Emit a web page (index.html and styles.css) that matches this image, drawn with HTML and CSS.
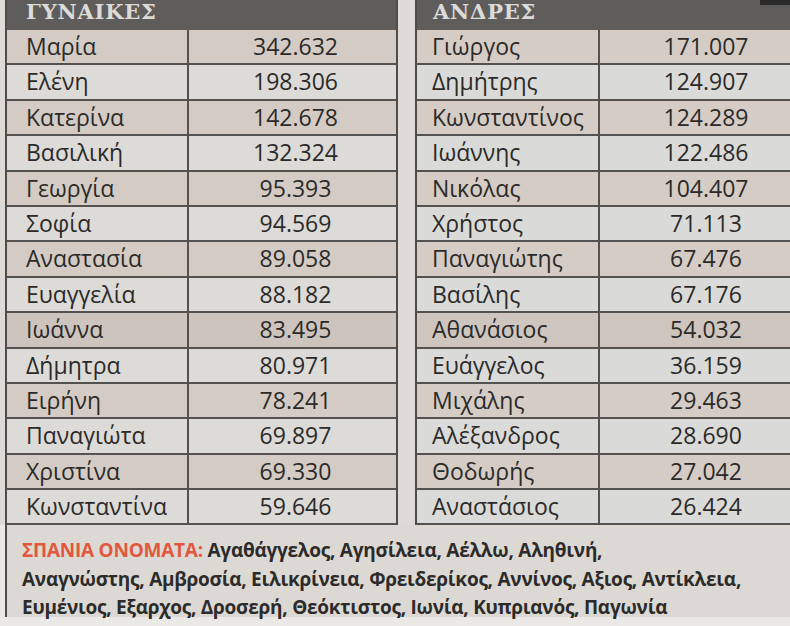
FILE: index.html
```html
<!DOCTYPE html>
<html lang="el">
<head>
<meta charset="utf-8">
<title>Ονόματα</title>
<link rel="stylesheet" href="styles.css">
</head>
<body>
<div class="page">
  <div class="tables">
    <section class="panel panel-left">
      <div class="head">ΓΥΝΑΙΚΕΣ</div>
      <div class="row odd"><span class="name">Μαρία</span><span class="num">342.632</span></div>
      <div class="row"><span class="name">Ελένη</span><span class="num">198.306</span></div>
      <div class="row odd"><span class="name">Κατερίνα</span><span class="num">142.678</span></div>
      <div class="row"><span class="name">Βασιλική</span><span class="num">132.324</span></div>
      <div class="row odd"><span class="name">Γεωργία</span><span class="num">95.393</span></div>
      <div class="row"><span class="name">Σοφία</span><span class="num">94.569</span></div>
      <div class="row odd"><span class="name">Αναστασία</span><span class="num">89.058</span></div>
      <div class="row"><span class="name">Ευαγγελία</span><span class="num">88.182</span></div>
      <div class="row odd dark"><span class="name">Ιωάννα</span><span class="num">83.495</span></div>
      <div class="row"><span class="name">Δήμητρα</span><span class="num">80.971</span></div>
      <div class="row odd"><span class="name">Ειρήνη</span><span class="num">78.241</span></div>
      <div class="row"><span class="name">Παναγιώτα</span><span class="num">69.897</span></div>
      <div class="row odd"><span class="name">Χριστίνα</span><span class="num">69.330</span></div>
      <div class="row"><span class="name">Κωνσταντίνα</span><span class="num">59.646</span></div>
    </section>
    <section class="panel panel-right">
      <div class="head">ΑΝΔΡΕΣ</div>
      <div class="row odd"><span class="name">Γιώργος</span><span class="num">171.007</span></div>
      <div class="row"><span class="name">Δημήτρης</span><span class="num">124.907</span></div>
      <div class="row odd"><span class="name">Κωνσταντίνος</span><span class="num">124.289</span></div>
      <div class="row"><span class="name">Ιωάννης</span><span class="num">122.486</span></div>
      <div class="row odd"><span class="name">Νικόλας</span><span class="num">104.407</span></div>
      <div class="row"><span class="name">Χρήστος</span><span class="num">71.113</span></div>
      <div class="row odd"><span class="name">Παναγιώτης</span><span class="num">67.476</span></div>
      <div class="row"><span class="name">Βασίλης</span><span class="num">67.176</span></div>
      <div class="row odd dark"><span class="name">Αθανάσιος</span><span class="num">54.032</span></div>
      <div class="row"><span class="name">Ευάγγελος</span><span class="num">36.159</span></div>
      <div class="row odd"><span class="name">Μιχάλης</span><span class="num">29.463</span></div>
      <div class="row"><span class="name">Αλέξανδρος</span><span class="num">28.690</span></div>
      <div class="row odd"><span class="name">Θοδωρής</span><span class="num">27.042</span></div>
      <div class="row"><span class="name">Αναστάσιος</span><span class="num">26.424</span></div>
    </section>
  </div>
  <div class="rare">
    <p><span class="rare-title">ΣΠΑΝΙΑ ΟΝΟΜΑΤΑ:</span> Αγαθάγγελος, Αγησίλεια, Αέλλω, Αληθινή,<br>Αναγνώστης, Αμβροσία, Ειλικρίνεια, Φρειδερίκος, Αννίνος, Αξιος, Αντίκλεια,<br>Ευμένιος, Εξαρχος, Δροσερή, Θεόκτιστος, Ιωνία, Κυπριανός, Παγωνία</p>
  </div>
  <div class="blot"></div>
</div>
</body>
</html>
```

FILE: styles.css
```css
html, body {
  margin: 0;
  padding: 0;
}
body {
  background: #ebe9e6;
  width: 790px;
  height: 626px;
  overflow: hidden;
}
.page {
  position: relative;
  width: 790px;
  height: 626px;
  overflow: hidden;
  font-family: "Open Sans", "Noto Sans", sans-serif;
  color: #2b2a29;
}
.tables {
  display: flex;
  padding-left: 5px;
  background: #dedad5;
}
.panel {
  border-left: 2px solid #4e4d4b;
}
.panel-left {
  width: 389px;
  border-right: 2px solid #4e4d4b;
}
.panel-right {
  margin-left: 17px;
  flex: 1;
}
.head {
  height: 30px;
  box-sizing: border-box;
  background: #5e5d5b;
  color: #dcdbd8;
  font-family: "DejaVu Serif", serif;
  font-weight: bold;
  font-size: 21px;
  letter-spacing: 0.8px;
  line-height: 24px;
  padding-left: 19px;
}
.panel-right .head {
  padding-left: 16px;
}
.row {
  display: grid;
  grid-template-columns: 182px 1fr;
  height: 35.4px;
  box-sizing: border-box;
  border-bottom: 2px solid #535250;
  background: #dddbd7;
  font-size: 23px;
  font-weight: 500;
  line-height: 33px;
}
.row.odd {
  background: #d4ccc4;
}
.row.dark {
  background: #cdc5bd;
}
.panel-right .row {
  grid-template-columns: 183px 1fr;
  background: #dadbd8;
}
.panel-right .row.odd {
  background: #d5cdc5;
}
.panel-right .row.dark {
  background: #cec6be;
}
.name {
  padding-left: 19px;
  border-right: 2px solid #535250;
  white-space: nowrap;
}
.panel-right .name {
  padding-left: 15px;
}
.num {
  text-align: center;
  padding-left: 6px;
}
.panel-right .num {
  padding-left: 22px;
}
.rare {
  margin-left: 5px;
  border-left: 2px solid #4e4d4b;
  height: 92px;
  box-sizing: border-box;
  background: #dcd9d4;
  padding: 11px 0 0 15px;
}
.rare p {
  margin: 0;
  font-weight: bold;
  font-size: 19px;
  letter-spacing: -0.25px;
  line-height: 28.5px;
  color: #2c2b2a;
  white-space: nowrap;
}
.rare-title {
  color: #e2573d;
}
.blot {
  position: absolute;
  right: 0;
  top: 0;
  width: 30px;
  height: 5px;
  background: #2a2a2a;
}
```
